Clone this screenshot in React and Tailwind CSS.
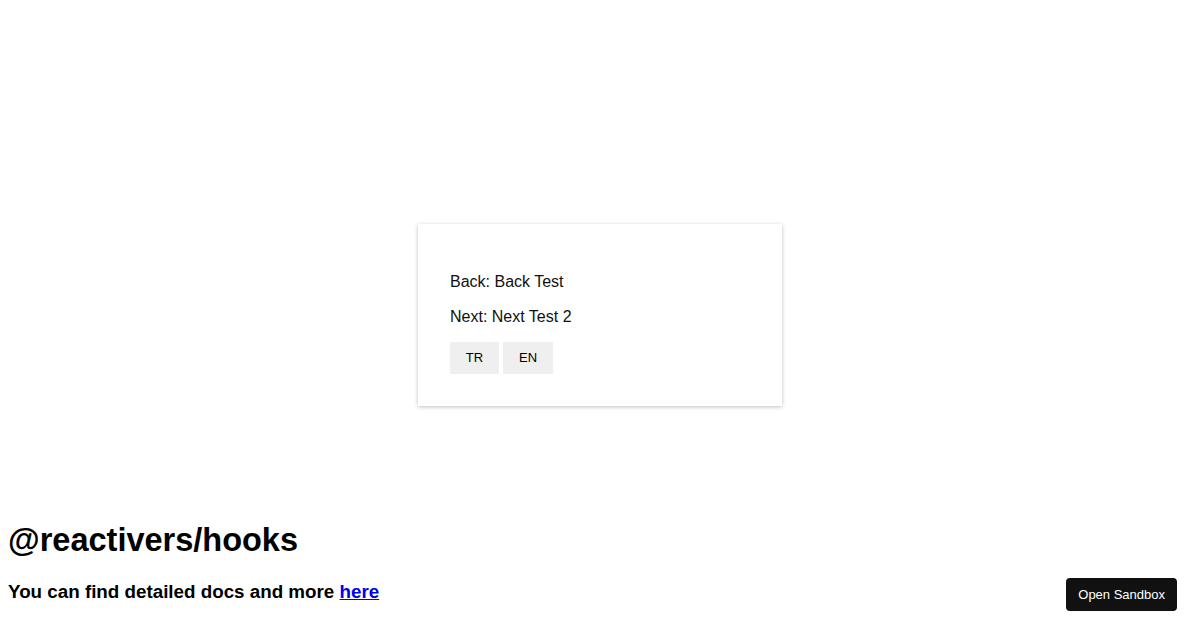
export default function App() {
  return (
    <div className="min-h-[630px] bg-white text-black font-['Liberation_Sans',Arial,sans-serif]">
      <div className="pt-[224px] flex justify-center">
        <div className="w-[364px] bg-white p-8 shadow-[0_1px_4px_rgba(0,0,0,0.25)]">
          <p className="mt-[17px] text-base leading-[18px] text-[#111]">Back: Back Test</p>
          <p className="mt-[17px] text-base leading-[18px] text-[#111]">Next: Next Test 2</p>
          <div className="mt-4 flex gap-1">
            <button className="h-8 w-[49px] bg-[#efefef] text-[13px] text-black">TR</button>
            <button className="h-8 w-[50px] bg-[#efefef] text-[13px] text-black">EN</button>
          </div>
        </div>
      </div>
      <div className="px-2">
        <h1 className="mt-[116px] text-[32.5px] font-bold leading-[37px]">@reactivers/hooks</h1>
        <h3 className="mt-[22px] text-[18.8px] font-bold leading-[22px]">
          You can find detailed docs and more{' '}
          <a href="#" className="text-[#0000ee] underline">here</a>
        </h3>
      </div>
      <button className="fixed right-[23px] bottom-[19px] h-[33px] px-[12px] rounded-[4px] bg-[#111] text-white text-[13px]">
        Open Sandbox
      </button>
    </div>
  );
}
